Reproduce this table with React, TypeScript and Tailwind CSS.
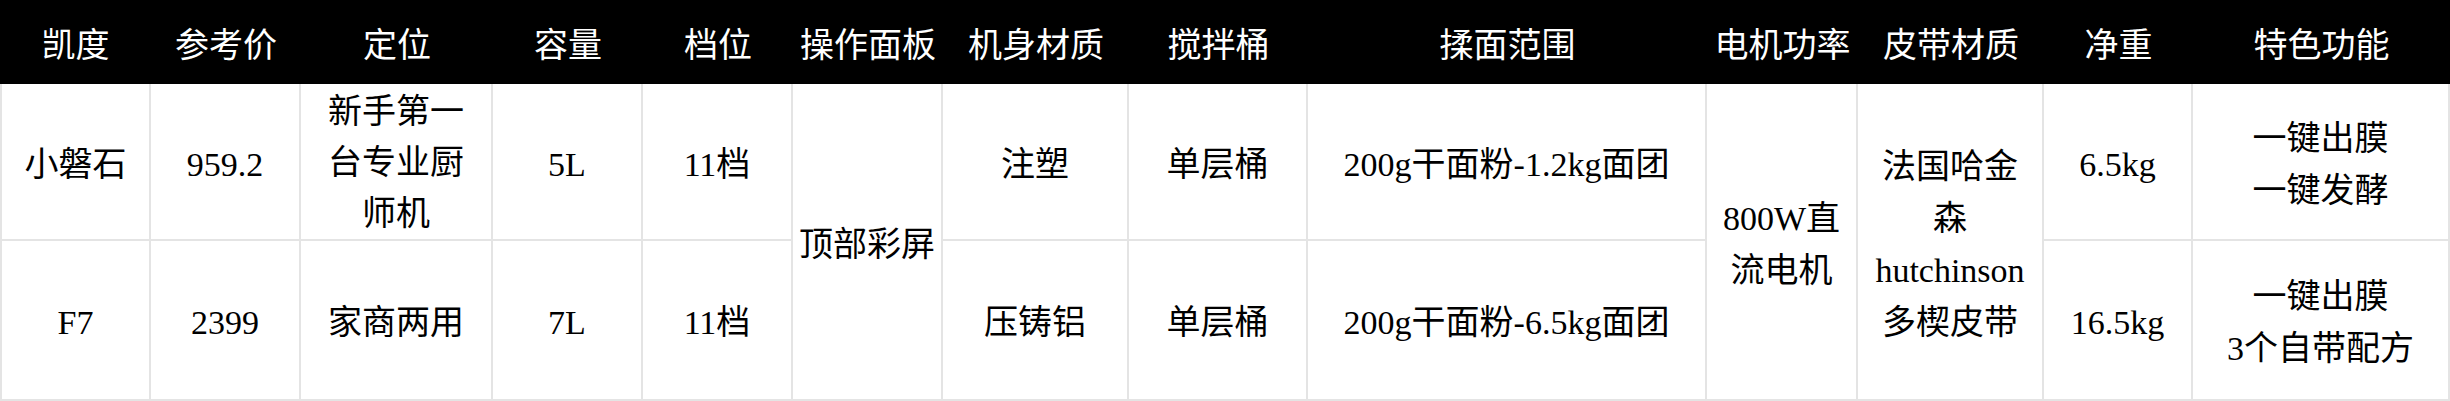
const widths = [151, 150, 192, 150, 150, 150, 186, 179, 399, 151, 186, 149, 257];

const headers = [
  "凯度",
  "参考价",
  "定位",
  "容量",
  "档位",
  "操作面板",
  "机身材质",
  "搅拌桶",
  "揉面范围",
  "电机功率",
  "皮带材质",
  "净重",
  "特色功能",
];

const cell =
  "border-r-2 border-b-2 border-[#e4e4e4] px-[4px] pt-[6px] text-center align-middle whitespace-nowrap";

const App = () => {
  return (
    <div className="w-[2450px] bg-white">
      <table
        className="w-[2450px] table-fixed border-separate border-spacing-0 text-[34px] leading-[52px] text-black"
        style={{ fontFamily: '"Liberation Serif", "Noto Sans CJK SC", serif' }}
      >
        <colgroup>
          {widths.map((w, i) => (
            <col key={i} style={{ width: w }} />
          ))}
        </colgroup>
        <thead>
          <tr className="h-[84px] bg-black">
            {headers.map((h) => (
              <th
                key={h}
                className="p-0 pt-[8px] text-center align-middle font-normal whitespace-nowrap text-white"
              >
                {h}
              </th>
            ))}
          </tr>
        </thead>
        <tbody>
          <tr className="h-[157px]">
            <td className={`${cell} border-l-2`}>小磐石</td>
            <td className={cell}>959.2</td>
            <td className="border-r-2 border-b-2 border-[#e4e4e4] px-[4px] pt-[2px] text-center align-middle leading-[51px] whitespace-nowrap">
              新手第一
              <br />
              台专业厨
              <br />
              师机
            </td>
            <td className={cell}>5L</td>
            <td className={cell}>11档</td>
            <td rowSpan={2} className={cell}>
              顶部彩屏
            </td>
            <td className={cell}>注塑</td>
            <td className={cell}>单层桶</td>
            <td className={cell}>200g干面粉-1.2kg面团</td>
            <td rowSpan={2} className={cell}>
              800W直
              <br />
              流电机
            </td>
            <td rowSpan={2} className={cell}>
              法国哈金
              <br />
              森
              <br />
              hutchinson
              <br />
              多楔皮带
            </td>
            <td className={cell}>6.5kg</td>
            <td className={cell}>
              一键出膜
              <br />
              一键发酵
            </td>
          </tr>
          <tr className="h-[160px]">
            <td className={`${cell} border-l-2`}>F7</td>
            <td className={cell}>2399</td>
            <td className={cell}>家商两用</td>
            <td className={cell}>7L</td>
            <td className={cell}>11档</td>
            <td className={cell}>压铸铝</td>
            <td className={cell}>单层桶</td>
            <td className={cell}>200g干面粉-6.5kg面团</td>
            <td className={cell}>16.5kg</td>
            <td className={cell}>
              一键出膜
              <br />
              3个自带配方
            </td>
          </tr>
        </tbody>
      </table>
    </div>
  );
};

export default App;
